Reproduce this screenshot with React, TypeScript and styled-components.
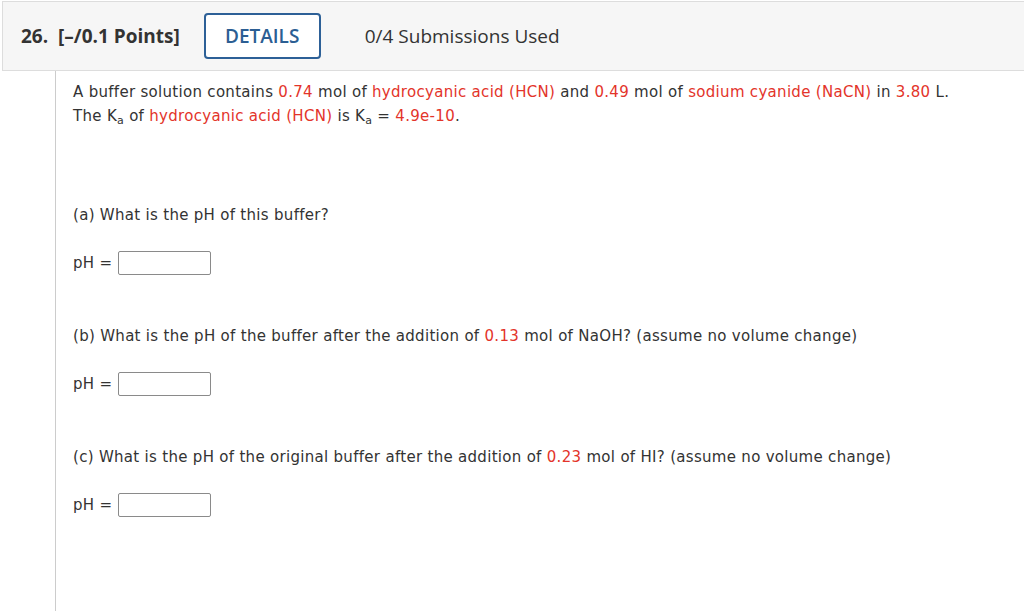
import React from "react";
import styled, { createGlobalStyle } from "styled-components";

const GlobalStyle = createGlobalStyle`
  html, body {
    margin: 0;
    padding: 0;
    background: #ffffff;
  }
  body {
    font-family: "DejaVu Sans", Verdana, sans-serif;
    color: #333333;
  }
`;

const Page = styled.div`
  padding: 1px 0 0 2px;
  min-height: 610px;
  display: flex;
  flex-direction: column;
`;

const Header = styled.div`
  height: 68px;
  display: flex;
  align-items: center;
  background: #f6f6f6;
  border: 1px solid #dddddd;
  border-right: none;
  padding-left: 18px;
  font-family: "Open Sans", "Liberation Sans", sans-serif;
  color: #333333;
`;

const Points = styled.span`
  font-size: 19px;
  font-weight: 700;
  white-space: pre;
`;

const DetailsButton = styled.button`
  margin-left: 24px;
  width: 117px;
  height: 46px;
  border: 2px solid #2d6097;
  border-radius: 4px;
  background: #ffffff;
  color: #2b5e93;
  font-family: "Open Sans", "Liberation Sans", sans-serif;
  font-size: 19px;
  font-weight: 600;
  padding: 0;
  cursor: pointer;
`;

const Submissions = styled.span`
  margin-left: 44px;
  font-size: 19px;
`;

const Body = styled.div`
  flex: 1;
  margin-left: 53px;
  border-left: 1px solid #cccccc;
  padding: 9px 0 0 17px;
  font-size: 15px;
  letter-spacing: 0.3px;
  line-height: 24px;
`;

const Intro = styled.p`
  margin: 0;
`;

const Question = styled.p<{ $gap: number }>`
  margin: ${(p) => p.$gap}px 0 0;
`;

const Red = styled.span`
  color: #e3342a;
`;

const Sub = styled.sub`
  font-size: 11px;
  vertical-align: -3px;
  line-height: 0;
`;

const AnswerRow = styled.label`
  display: flex;
  align-items: center;
  margin-top: 24px;
  height: 24px;
  gap: 6px;
`;

const AnswerInput = styled.input`
  width: 93px;
  height: 24px;
  box-sizing: border-box;
  border: 1px solid #8a8a8a;
  border-radius: 2px;
  padding: 0 4px;
  font-family: inherit;
  font-size: 15px;
`;

const Ka = () => (
  <>
    K<Sub>a</Sub>
  </>
);

const Answer = () => (
  <AnswerRow>
    pH =<AnswerInput type="text" />
  </AnswerRow>
);

export default function App() {
  return (
    <>
      <GlobalStyle />
      <Page>
        <Header>
          <Points>26.  [–/0.1 Points]</Points>
          <DetailsButton>DETAILS</DetailsButton>
          <Submissions>0/4 Submissions Used</Submissions>
        </Header>
        <Body>
          <Intro>
            A buffer solution contains <Red>0.74</Red> mol of{" "}
            <Red>hydrocyanic acid (HCN)</Red> and <Red>0.49</Red> mol of{" "}
            <Red>sodium cyanide (NaCN)</Red> in <Red>3.80</Red> L.
            <br />
            The <Ka /> of <Red>hydrocyanic acid (HCN)</Red> is <Ka /> ={" "}
            <Red>4.9e-10</Red>.
          </Intro>

          <Question $gap={75}>(a) What is the pH of this buffer?</Question>
          <Answer />

          <Question $gap={49}>
            (b) What is the pH of the buffer after the addition of{" "}
            <Red>0.13</Red> mol of NaOH? (assume no volume change)
          </Question>
          <Answer />

          <Question $gap={49}>
            (c) What is the pH of the original buffer after the addition of{" "}
            <Red>0.23</Red> mol of HI? (assume no volume change)
          </Question>
          <Answer />
        </Body>
      </Page>
    </>
  );
}
